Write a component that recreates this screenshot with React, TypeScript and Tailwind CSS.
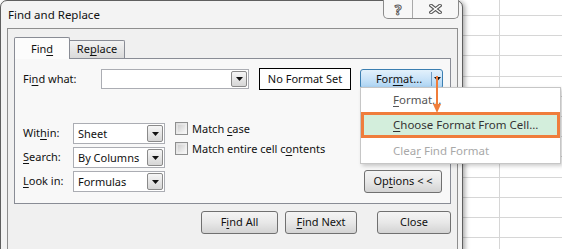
import React from "react";

function Acc({ children }: { children: React.ReactNode }) {
  return <span className="underline decoration-1 underline-offset-[2px]">{children}</span>;
}

function DropBtn() {
  return (
    <div className="flex w-[16px] items-center justify-center rounded-[2px] border border-[#8a8a8a] bg-gradient-to-b from-[#f6f6f6] to-[#d6d6d6]">
      <svg width="7" height="4" viewBox="0 0 7 4">
        <path d="M0 0h7L3.5 4z" fill="#111" />
      </svg>
    </div>
  );
}

function Select({ value }: { value: string }) {
  return (
    <div className="flex h-[21px] w-[92px] border border-[#abadb3] bg-white p-[1px]">
      <span className="flex-1 pl-[3px] leading-[17px]">{value}</span>
      <DropBtn />
    </div>
  );
}

function Btn({ w, children }: { w: string; children: React.ReactNode }) {
  return (
    <div
      className={`flex h-[23px] items-center justify-center rounded-[3px] border border-[#707070] bg-gradient-to-b from-[#f4f4f4] via-[#e8e8e8] to-[#d3d3d3] ${w}`}
    >
      <span className="whitespace-nowrap">{children}</span>
    </div>
  );
}

function Check({ children }: { children: React.ReactNode }) {
  return (
    <div className="flex h-[20px] items-start gap-[4px]">
      <div className="h-[13px] w-[13px] border border-[#8e8f8f] bg-gradient-to-br from-[#dcdcdc] to-[#f8f8f8] p-[2px]">
        <div className="h-full w-full bg-gradient-to-br from-[#cfcfcf] to-[#f4f4f4]" />
      </div>
      <span className="-mt-[2px] whitespace-nowrap leading-[17px]">{children}</span>
    </div>
  );
}

function Dialog() {
  return (
    <div className="relative z-10 flex h-[258px] w-[463px] shrink-0 flex-col rounded-t-[7px] border border-[#5f5f5f] bg-[#f3f3f3] shadow-[2px_1px_5px_rgba(0,0,0,0.35)]">
      <div className="flex h-[27px] items-start">
        <span className="pl-[7px] pt-[5px] text-[11.5px] leading-[18px]">Find and Replace</span>
        <div className="-mt-[1px] ml-auto mr-[3px] flex h-[19px] rounded-b-[5px] border border-t-0 border-[#8b8b8b] bg-[#f7f7f7]">
          <div className="flex w-[29px] items-center justify-center border-r border-[#a9a9a9] text-[14px] font-bold text-white [-webkit-text-stroke:1px_#5a5a5a]">
            ?
          </div>
          <div className="flex w-[45px] items-center justify-center">
            <svg width="13" height="10" viewBox="0 0 13 10">
              <path d="M2 1.5L11 8.5M11 1.5L2 8.5" stroke="#5a5a5a" strokeWidth="3.6" strokeLinecap="square" />
              <path d="M2 1.5L11 8.5M11 1.5L2 8.5" stroke="#fff" strokeWidth="1.4" strokeLinecap="square" />
            </svg>
          </div>
        </div>
      </div>
      <div className="ml-[6px] flex w-[451px] flex-1 flex-col border border-[#8e8e8e] bg-[#f0f0f0] px-[6px] pt-[8px]">
        <div className="flex h-[21px] items-end">
          <div className="relative z-10 -mb-[1px] flex h-[22px] w-[56px] items-center justify-center rounded-t-[2px] border border-b-0 border-[#898c95] bg-[#fcfcfc] pt-[1px]">
            <span>
              Fin<Acc>d</Acc>
            </span>
          </div>
          <div className="flex h-[18px] w-[55px] items-center justify-center rounded-tr-[2px] border border-l-0 border-b-0 border-[#898c95] bg-gradient-to-b from-[#f3f3f3] to-[#dadada]">
            <span>
              Re<Acc>p</Acc>lace
            </span>
          </div>
        </div>
        <div className="flex h-[146px] w-[437px] flex-col border border-[#898c95] bg-[#f8f8f8] pl-[8px]">
          <div className="mt-[9px] flex h-[22px] items-center">
            <span className="w-[78px]">
              Fi<Acc>n</Acc>d what:
            </span>
            <div className="flex h-[20px] w-[148px] justify-end border border-[#abadb3] bg-white p-[1px]">
              <DropBtn />
            </div>
            <div className="ml-[10px] flex h-[22px] w-[92px] items-center justify-center border border-black bg-white">
              No Format Set
            </div>
            <div className="ml-[9px] flex h-[20px] w-[83px] rounded-[3px] border border-[#3c7fb1] bg-gradient-to-b from-[#e3f1fc] via-[#c9e3f8] to-[#a9d2f2]">
              <span className="flex flex-1 items-center justify-center pl-[6px]">
                <span>
                  For<Acc>m</Acc>at...
                </span>
              </span>
              <div className="my-[2px] w-px bg-[#6f9cc4]" />
              <div className="flex w-[10px] items-center justify-center">
                <svg width="7" height="4" viewBox="0 0 7 4">
                  <path d="M0 0h7L3.5 4z" fill="#111" />
                </svg>
              </div>
            </div>
          </div>
          <div className="mt-[33px] flex items-start">
            <div className="flex flex-col gap-[3px]">
              <div className="flex items-center">
                <span className="w-[50px]">
                  Wit<Acc>h</Acc>in:
                </span>
                <Select value="Sheet" />
              </div>
              <div className="flex items-center">
                <span className="w-[50px]">
                  <Acc>S</Acc>earch:
                </span>
                <Select value="By Columns" />
              </div>
              <div className="flex items-center">
                <span className="w-[50px]">
                  <Acc>L</Acc>ook in:
                </span>
                <Select value="Formulas" />
              </div>
            </div>
            <div className="-mt-[1px] ml-[10px] flex flex-col">
              <Check>
                Match <Acc>c</Acc>ase
              </Check>
              <Check>
                Match entire cell c<Acc>o</Acc>ntents
              </Check>
            </div>
            <div className="ml-auto mr-[8px] mt-[47px]">
              <Btn w="w-[78px]">
                Op<Acc>t</Acc>ions &lt; &lt;
              </Btn>
            </div>
          </div>
        </div>
        <div className="mt-[7px] flex justify-end">
          <Btn w="w-[77px]">
            F<Acc>i</Acc>nd All
          </Btn>
          <div className="ml-[7px]">
            <Btn w="w-[72px]">
              <Acc>F</Acc>ind Next
            </Btn>
          </div>
          <div className="ml-[20px]">
            <Btn w="w-[74px]">Close</Btn>
          </div>
        </div>
      </div>
    </div>
  );
}

function SheetGrid() {
  const rows = Array.from({ length: 12 });
  return (
    <div className="flex flex-1 flex-col">
      <div className="flex h-[16px] shrink-0 border-b border-[#d6d6d6]">
        <div className="w-[37px] border-r border-[#d6d6d6]" />
      </div>
      {rows.map((_, i) => (
        <div key={i} className="flex h-[20.2px] shrink-0 border-b border-[#d6d6d6]">
          <div className="w-[37px] border-r border-[#d6d6d6]" />
        </div>
      ))}
    </div>
  );
}

function FormatMenu() {
  return (
    <div className="absolute left-[360px] top-[87px] z-20 flex h-[77px] w-[201px] flex-col border border-[#c6c6c6] bg-white text-[11.5px] shadow-[2px_2px_4px_rgba(0,0,0,0.2)]">
      <div className="flex h-[24px] items-center whitespace-nowrap pl-[32px] text-[#555]">
        <span>
          <Acc>F</Acc>ormat...
        </span>
      </div>
      <div className="flex h-[26px] items-center whitespace-nowrap border-[3px] border-[#ef7d3c] bg-[#d3eedc] pl-[29px] text-[#333]">
        <span>
          <Acc>C</Acc>hoose Format From Cell...
        </span>
      </div>
      <div className="flex h-[25px] items-center whitespace-nowrap pl-[32px] text-[#a8a8a8]">
        <span>
          Clea<Acc>r</Acc> Find Format
        </span>
      </div>
    </div>
  );
}

export default function App() {
  return (
    <div className="relative flex h-[249px] w-[562px] overflow-hidden bg-white font-['Noto_Sans',sans-serif] text-[11px] text-[#111]">
      <Dialog />
      <SheetGrid />
      <FormatMenu />
      <svg className="absolute left-[432px] top-[76px] z-30" width="10" height="37" viewBox="0 0 10 37">
        <path d="M5 0V30" stroke="#f07d3a" strokeWidth="2" />
        <path d="M1 28h8l-4 9z" fill="#f07d3a" />
      </svg>
    </div>
  );
}
